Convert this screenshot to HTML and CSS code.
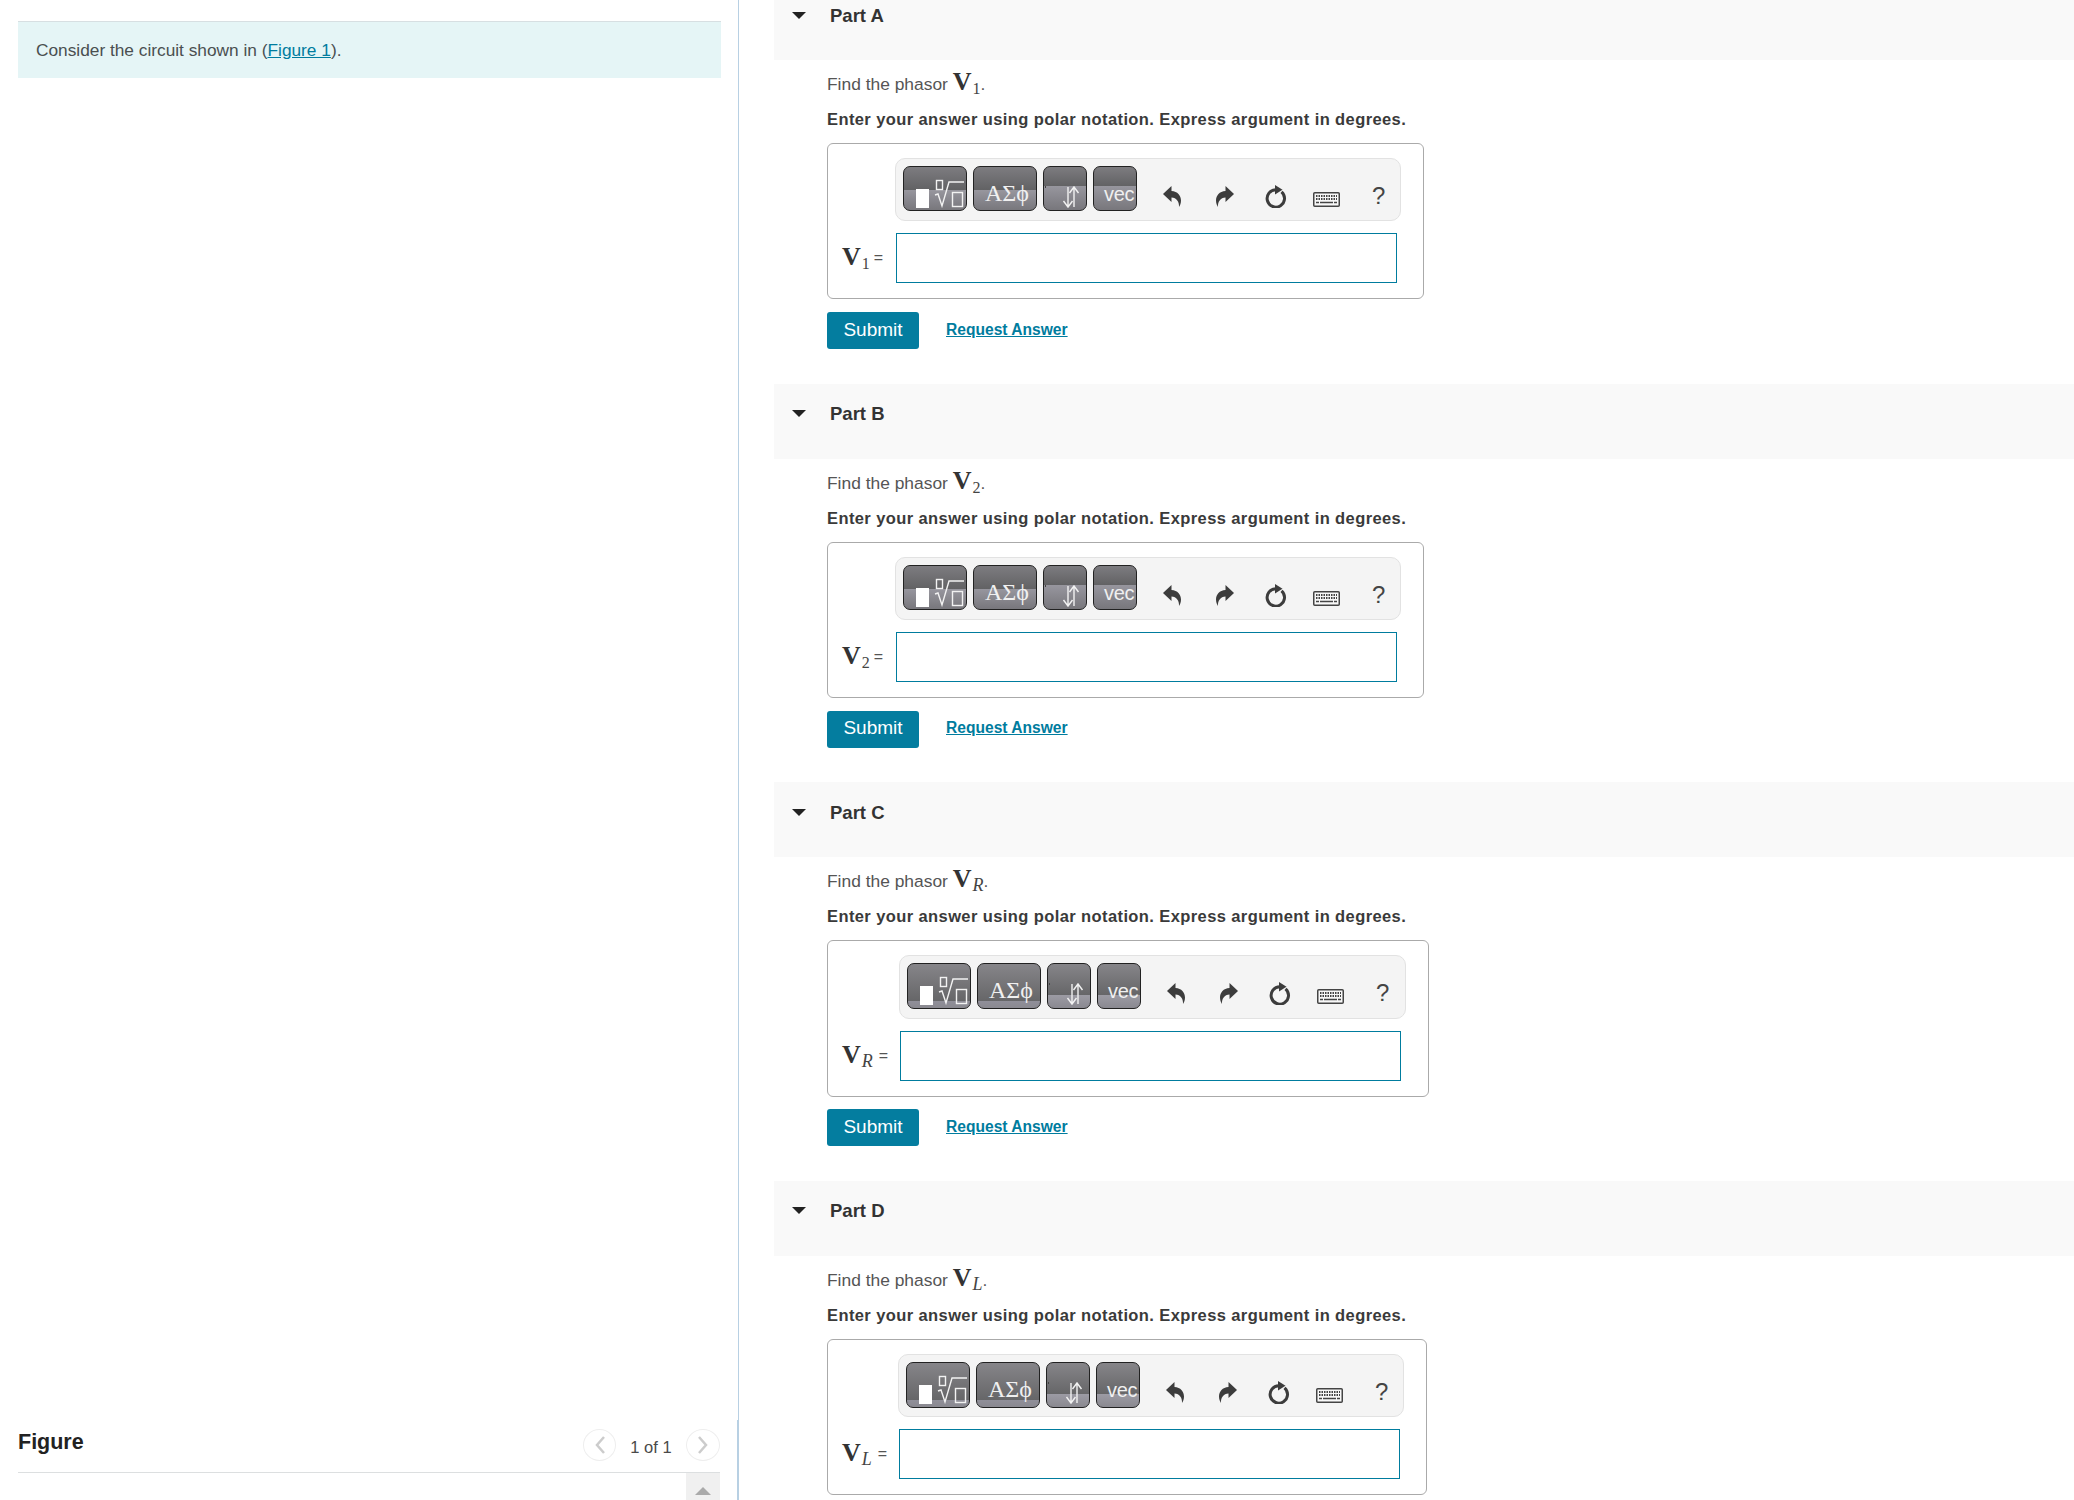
FILE: index.html
```html
<!DOCTYPE html>
<html lang="en">
<head>
<meta charset="utf-8">
<title>Phasors</title>
<link rel="stylesheet" href="styles.css">
</head>
<body>
<svg class="defs" width="0" height="0" aria-hidden="true">
  <defs>
    <symbol id="i-root" viewBox="0 0 64 45">
      <rect class="w" x="13" y="23" width="13" height="19"/>
      <rect class="o" x="33.5" y="14.5" width="6" height="9"/>
      <path class="o" d="M32 29l3-1 4 12 7-24h15"/>
      <rect class="o" x="49.5" y="26.5" width="10" height="14"/>
    </symbol>
    <symbol id="i-arrows" viewBox="0 0 44 45">
      <path class="o" d="M25 21v20M20.500 35l4.500 6 4.500-6M31 41V21M26.500 27l4.500-6 4.500 6"/>
      <path class="m" d="M3 20l-1 1 1 1"/>
    </symbol>
    <symbol id="i-dots" viewBox="0 0 44 45">
      <circle class="d" cx="18.500" cy="1.500" r="1"/>
      <circle class="d" cx="27.500" cy="1.500" r="1"/>
    </symbol>
    <symbol id="i-undo" viewBox="0 0 18 21">
      <path d="M0 8l8.500-8v5c6 .3 9.500 4.500 9.500 9.500 0 2.800-1 5-2 6.500.5-5-2.500-9.500-7.500-9.500v4.500z"/>
    </symbol>
    <symbol id="i-reload" viewBox="0 0 22 23">
      <path class="r" d="M16.500 6.800a8.700 8.700 0 1 1-5.500-2.100"/>
      <path d="M10 0l7.500 4.800-7.500 4.700z"/>
    </symbol>
    <symbol id="i-kbd" viewBox="0 0 27 15">
      <rect class="k" x=".75" y=".75" width="25.500" height="13.500" rx="1"/>
      <path class="kk" d="M3 4h21M3 7h21"/>
      <path class="kl" d="M3 10.500h3M7 10.500h13M21 10.500h3"/>
    </symbol>
  </defs>
</svg>
<div class="page">
  <aside class="left">
    <div class="callout">Consider the circuit shown in (<a href="#">Figure 1</a>).</div>
    <section class="figure">
      <div class="figure-head">
        <h2>Figure</h2>
        <div class="pager">
          <span class="round"><svg width="12" height="20" viewBox="0 0 12 20"><path d="M10 2L3 10l7 8"/></svg></span>
          <span class="count">1 of 1</span>
          <span class="round"><svg width="12" height="20" viewBox="0 0 12 20"><path d="M2 2l7 8-7 8"/></svg></span>
        </div>
      </div>
      <div class="scrollrow"><span class="scrollbtn"><span class="up"></span></span></div>
    </section>
  </aside>
  <main class="right">
    <div class="parts">
      <section class="part">
        <header class="part-head"><span class="caret"></span><h3>Part A</h3></header>
        <div class="part-body">
          <p class="find">Find the phasor <b class="mv">V</b><span class="ms">1</span>.</p>
          <p class="instr">Enter your answer using polar notation. Express argument in degrees.</p>
          <div class="box w-a split-a">
            <span class="lab"></span>
            <div class="toolbar">
              <span class="btn b-l"><svg class="ic"><use href="#i-root"/></svg></span>
              <span class="btn b-l greek">ΑΣϕ</span>
              <span class="btn b-s"><svg class="ic"><use href="#i-arrows"/></svg></span>
              <span class="btn b-s vec"><svg class="ic"><use href="#i-dots"/></svg>vec</span>
              <svg class="t undo"><use href="#i-undo"/></svg>
              <svg class="t redo"><use href="#i-undo"/></svg>
              <svg class="t reload"><use href="#i-reload"/></svg>
              <svg class="t kbd"><use href="#i-kbd"/></svg>
              <span class="help">?</span>
            </div>
            <label class="lab"><b class="mv">V</b><span class="ms">1</span><span class="eq">=</span></label>
            <input class="answer" type="text" aria-label="V1">
          </div>
          <div class="actions"><button class="submit" type="button">Submit</button><a class="req" href="#">Request Answer</a></div>
        </div>
      </section>
      <section class="part">
        <header class="part-head"><span class="caret"></span><h3>Part B</h3></header>
        <div class="part-body">
          <p class="find">Find the phasor <b class="mv">V</b><span class="ms">2</span>.</p>
          <p class="instr">Enter your answer using polar notation. Express argument in degrees.</p>
          <div class="box w-a split-a">
            <span class="lab"></span>
            <div class="toolbar">
              <span class="btn b-l"><svg class="ic"><use href="#i-root"/></svg></span>
              <span class="btn b-l greek">ΑΣϕ</span>
              <span class="btn b-s"><svg class="ic"><use href="#i-arrows"/></svg></span>
              <span class="btn b-s vec"><svg class="ic"><use href="#i-dots"/></svg>vec</span>
              <svg class="t undo"><use href="#i-undo"/></svg>
              <svg class="t redo"><use href="#i-undo"/></svg>
              <svg class="t reload"><use href="#i-reload"/></svg>
              <svg class="t kbd"><use href="#i-kbd"/></svg>
              <span class="help">?</span>
            </div>
            <label class="lab"><b class="mv">V</b><span class="ms">2</span><span class="eq">=</span></label>
            <input class="answer" type="text" aria-label="V2">
          </div>
          <div class="actions"><button class="submit" type="button">Submit</button><a class="req" href="#">Request Answer</a></div>
        </div>
      </section>
      <section class="part">
        <header class="part-head"><span class="caret"></span><h3>Part C</h3></header>
        <div class="part-body">
          <p class="find">Find the phasor <b class="mv">V</b><i class="ms">R</i>.</p>
          <p class="instr">Enter your answer using polar notation. Express argument in degrees.</p>
          <div class="box w-c split-c">
            <span class="lab"></span>
            <div class="toolbar">
              <span class="btn b-l"><svg class="ic"><use href="#i-root"/></svg></span>
              <span class="btn b-l greek">ΑΣϕ</span>
              <span class="btn b-s"><svg class="ic"><use href="#i-arrows"/></svg></span>
              <span class="btn b-s vec"><svg class="ic"><use href="#i-dots"/></svg>vec</span>
              <svg class="t undo"><use href="#i-undo"/></svg>
              <svg class="t redo"><use href="#i-undo"/></svg>
              <svg class="t reload"><use href="#i-reload"/></svg>
              <svg class="t kbd"><use href="#i-kbd"/></svg>
              <span class="help">?</span>
            </div>
            <label class="lab"><b class="mv">V</b><i class="ms">R</i><span class="eq">=</span></label>
            <input class="answer" type="text" aria-label="VR">
          </div>
          <div class="actions"><button class="submit" type="button">Submit</button><a class="req" href="#">Request Answer</a></div>
        </div>
      </section>
      <section class="part">
        <header class="part-head"><span class="caret"></span><h3>Part D</h3></header>
        <div class="part-body">
          <p class="find">Find the phasor <b class="mv">V</b><i class="ms">L</i>.</p>
          <p class="instr">Enter your answer using polar notation. Express argument in degrees.</p>
          <div class="box w-d split-c">
            <span class="lab"></span>
            <div class="toolbar">
              <span class="btn b-l"><svg class="ic"><use href="#i-root"/></svg></span>
              <span class="btn b-l greek">ΑΣϕ</span>
              <span class="btn b-s"><svg class="ic"><use href="#i-arrows"/></svg></span>
              <span class="btn b-s vec"><svg class="ic"><use href="#i-dots"/></svg>vec</span>
              <svg class="t undo"><use href="#i-undo"/></svg>
              <svg class="t redo"><use href="#i-undo"/></svg>
              <svg class="t reload"><use href="#i-reload"/></svg>
              <svg class="t kbd"><use href="#i-kbd"/></svg>
              <span class="help">?</span>
            </div>
            <label class="lab"><b class="mv">V</b><i class="ms">L</i><span class="eq">=</span></label>
            <input class="answer" type="text" aria-label="VL">
          </div>
        </div>
      </section>
    </div>
  </main>
</div>
</body>
</html>
```
FILE: styles.css
```css
* { box-sizing: border-box; }
html, body { margin: 0; height: 1500px; overflow: hidden; background: #fff; }
body { font-family: "Liberation Sans", Arial, sans-serif; color: #333; }
.defs { display: block; height: 0; }
.page { display: flex; height: 1500px; overflow: hidden; }

/* left column */
.left { width: 739px; flex: none; display: flex; flex-direction: column; border-right: 1px solid #b8d0e3; padding-top: 21px; }
.callout { margin: 0 17px 0 18px; height: 57px; padding-left: 18px; display: flex; align-items: center; white-space: pre-wrap; background: #e5f5f6; border-top: 1px solid #d7dfe2; font-size: 17.3px; color: #4a4f50; }
.callout a { color: #007c9e; }
.figure { margin-top: auto; height: 80px; border-right: 1px solid #b8d0e3; padding: 0 17px 0 18px; }
.figure-head { height: 53px; padding-top: 9px; display: flex; align-items: flex-start; justify-content: space-between; border-bottom: 1px solid #dcdfe0; }
.figure-head h2 { margin: 1px 0 0; font-size: 21.5px; line-height: 24px; font-weight: 700; color: #222; }
.pager { display: flex; align-items: center; }
.round { width: 33px; height: 32px; border: 1px solid #eee; border-radius: 50%; display: flex; align-items: center; justify-content: center; }
.round:last-child { width: 34px; }
.round svg path { fill: none; stroke: #ccc; stroke-width: 2.500; }
.count { width: 70px; text-align: center; font-size: 16.500px; color: #4a4a4a; padding-top: 5px; }
.scrollrow { display: flex; justify-content: flex-end; }
.scrollbtn { width: 34px; height: 27px; background: #f0f0f0; display: flex; justify-content: center; padding-top: 14px; }
.up { width: 0; height: 0; border-left: 8px solid transparent; border-right: 8px solid transparent; border-bottom: 8px solid #aaa; }

/* right column */
.right { flex: 1; min-width: 0; padding-left: 35px; }
.parts { margin-top: -15px; }
.part { padding-bottom: 34.600px; }
.part-head { height: 75px; background: #f9f9f9; padding: 19.7px 0 0 18px; display: flex; align-items: flex-start; }
.caret { width: 0; height: 0; margin-top: 7px; border-left: 7px solid transparent; border-right: 7px solid transparent; border-top: 7px solid #222; }
.part-head h3 { margin: 0 0 0 24px; font-size: 18.500px; line-height: 22px; font-weight: 700; color: #333; }
.part-body { margin-left: 53px; }
.find { margin: 0; height: 48px; padding-top: 9px; font-size: 17.4px; line-height: 26px; color: #555; }
.instr { margin: 0; height: 35px; font-size: 16.500px; line-height: 22px; font-weight: 700; color: #3a3a3a; letter-spacing: .4px; }
.mv { font-family: "Liberation Serif", serif; font-size: 26px; font-weight: 700; color: #333; }
.ms { font-family: "Liberation Serif", serif; font-size: 16px; position: relative; top: 4px; margin-left: 1px; color: #444; }
i.ms { font-size: 18px; }

.box { display: grid; align-items: center; align-content: start; row-gap: 12px; height: 156px; padding: 14px 0 0 14px; border: 1px solid #aaa; border-radius: 6px; background: #fff; }
.w-a { width: 597px; grid-template-columns: 53px 506px; }
.w-c { width: 602px; height: 157px; grid-template-columns: 57px 507px; }
.w-c + .actions { margin-top: 12px; }
.w-c .toolbar { height: 64px; }
.w-d { width: 600px; grid-template-columns: 56px 506px; }
.lab { display: flex; align-items: baseline; white-space: nowrap; margin-top: -2px; }
.eq { margin-left: 6px; font-size: 16px; color: #555; position: relative; top: -2px; }
.w-a .eq { margin-left: 4px; }

.toolbar { height: 63px; padding-left: 7px; display: flex; align-items: flex-start; background: #f4f4f4; border: 1px solid #e2e2e2; border-radius: 10px; }
.btn { height: 45px; margin-top: 7px; margin-right: 6px; flex: none; overflow: hidden; display: block; border: 1px solid #222; border-radius: 7px; color: #f0f0f0; }
.split-c .btn { height: 46px; }
.b-l { width: 64px; }
.b-s { width: 44px; }
.btn.vec { margin-right: 0; }
.split-a .b-l { background: linear-gradient(#7d7c80 0, #626264 23px, #97969e 23px, #78777c 100%); }
.split-a .b-s { background: linear-gradient(#7d7c80 0, #626264 19px, #97969e 19px, #78777c 100%); }
.split-c .b-l { background: linear-gradient(#868589 0, #666668 37px, #908f99 37px, #8a8990 100%); }
.split-c .b-s { background: linear-gradient(#868589 0, #666668 31px, #9c9ba4 31px, #8a8990 100%); }
.ic { display: block; margin: -1px; width: 64px; height: 45px; }
.b-s .ic { width: 44px; }
.vec .ic { height: 6px; margin-bottom: 11px; }
.w { fill: #fff; }
.o { fill: none; stroke: #f2f2f2; stroke-width: 1.400; }
.m { fill: none; stroke: #444; stroke-width: 1; }
.d { fill: #333; }
.greek { padding: 12px 0 0 11px; font-family: "Liberation Serif", serif; font-size: 24px; line-height: 28px; white-space: nowrap; }
.vec { padding-left: 10px; font-size: 20px; line-height: 22px; white-space: nowrap; letter-spacing: -.3px; }
.split-c .greek { padding-top: 12px; }

.t { flex: none; fill: #3c3c3c; }
.undo { width: 18px; height: 21px; margin: 27px 0 0 26px; }
.redo { width: 18px; height: 21px; margin: 27px 0 0 35px; transform: scaleX(-1); }
.reload { width: 22px; height: 23px; margin: 26px 0 0 31px; }
.kbd { width: 27px; height: 15px; margin: 33px 0 0 26px; }
.r { fill: none; stroke: #3c3c3c; stroke-width: 3; }
.k { fill: #f8f8f8; stroke: #444; stroke-width: 1.500; }
.kk { fill: none; stroke: #444; stroke-width: 1.800; stroke-dasharray: 1.500 1; }
.kl { fill: none; stroke: #444; stroke-width: 1.500; }
.help { margin: 23px 0 0 32px; font-size: 24px; line-height: 28px; color: #444; }

.answer { width: 501px; height: 50px; margin: 0 0 0 1px; padding: 0 6px; border: 1px solid #007c9e; border-radius: 0; background: #fff; outline: none; grid-column: 2; }
.actions { display: flex; align-items: center; margin-top: 13px; height: 37px; }
.submit { width: 92px; height: 37px; padding: 0 0 2px; border: 0; border-radius: 3px; background: #047d9f; color: #fff; font-family: "Liberation Sans", Arial, sans-serif; font-size: 19px; }
.req { margin: -2px 0 0 27px; font-size: 15.600px; font-weight: 700; color: #007c9e; }
```
